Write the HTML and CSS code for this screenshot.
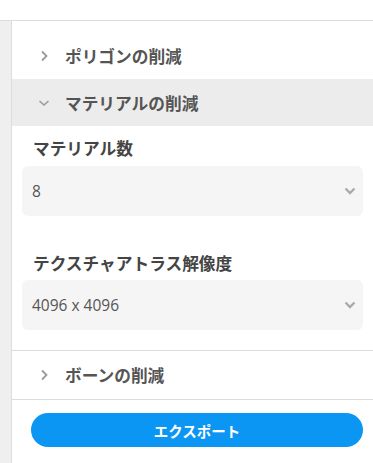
FILE: index.html
```html
<!DOCTYPE html>
<html lang="ja">
<head>
<meta charset="utf-8">
<link rel="stylesheet" href="styles.css">
</head>
<body>
<div class="top"></div>
<div class="main">
  <div class="rail"></div>
  <div class="panel">
    <div class="section-header">
      <svg class="chev" viewBox="0 0 12 12" width="12" height="12"><path d="M4 1.5 L8.5 6 L4 10.5" fill="none" stroke="#9a9a9a" stroke-width="1.8"/></svg>
      <span>ポリゴンの削減</span>
    </div>
    <div class="section-header active">
      <svg class="chev" viewBox="0 0 12 12" width="12" height="12"><path d="M1.5 4 L6 8 L10.5 4" fill="none" stroke="#9a9a9a" stroke-width="1.6"/></svg>
      <span>マテリアルの削減</span>
    </div>
    <div class="section-body">
      <div class="field-label">マテリアル数</div>
      <div class="select">
        <span class="value">8</span>
        <svg class="select-chev" viewBox="0 0 12 8" width="12" height="8"><path d="M1.5 1.5 L6 6 L10.5 1.5" fill="none" stroke="#aaaaaa" stroke-width="2.4"/></svg>
      </div>
      <div class="field-label second">テクスチャアトラス解像度</div>
      <div class="select">
        <span class="value">4096 x 4096</span>
        <svg class="select-chev" viewBox="0 0 12 8" width="12" height="8"><path d="M1.5 1.5 L6 6 L10.5 1.5" fill="none" stroke="#aaaaaa" stroke-width="2.4"/></svg>
      </div>
    </div>
    <div class="section-header bordered">
      <svg class="chev" viewBox="0 0 12 12" width="12" height="12"><path d="M4 1.5 L8.5 6 L4 10.5" fill="none" stroke="#9a9a9a" stroke-width="1.8"/></svg>
      <span>ボーンの削減</span>
    </div>
    <div class="actions">
      <button class="export">エクスポート</button>
    </div>
  </div>
</div>
</body>
</html>
```
FILE: styles.css
```css
html, body {
  margin: 0;
  padding: 0;
  background: #fff;
  font-family: "Open Sans", "Noto Sans CJK JP", sans-serif;
  height: 100%;
  overflow: hidden;
}
.top {
  height: 20px;
  border-bottom: 1px solid #dcdcdc;
}
.main {
  display: flex;
  height: calc(100% - 21px);
}
.rail {
  width: 11px;
  background: #efefef;
  border-right: 1px solid #dedede;
  flex: none;
}
.panel {
  flex: 1;
  padding-top: 11px;
}
.section-header {
  height: 47px;
  display: flex;
  align-items: center;
  padding-left: 26px;
  gap: 15px;
  font-family: "Noto Sans CJK JP", sans-serif;
  font-weight: 700;
  font-size: 16.7px;
  color: #555;
}
.section-header.active {
  background: #ececec;
}
.section-header.bordered {
  height: 48px;
  border-top: 1px solid #dcdcdc;
  border-bottom: 1px solid #dcdcdc;
}
.chev {
  flex: none;
}
.section-body {
  padding: 10px 10px 20px 10px;
}
.field-label {
  font-family: "Noto Sans CJK JP", sans-serif;
  font-weight: 700;
  font-size: 16.7px;
  line-height: 24px;
  color: #444;
  padding-left: 11px;
  margin-bottom: 6px;
}
.field-label.second {
  margin-top: 35px;
  margin-bottom: 5px;
}
.select {
  height: 50px;
  background: #f5f5f5;
  border-radius: 6px;
  display: flex;
  align-items: center;
  justify-content: space-between;
  padding: 0 7px 0 10px;
}
.value {
  font-size: 15.5px;
  color: #555;
}
.actions {
  padding: 13px 10px 0 19px;
}
.export {
  display: block;
  width: 100%;
  height: 34px;
  border: none;
  border-radius: 17px;
  background: #0b96f3;
  color: #fff;
  font-family: "Noto Sans CJK JP", sans-serif;
  font-weight: 700;
  font-size: 14.5px;
  padding: 0;
}
```
